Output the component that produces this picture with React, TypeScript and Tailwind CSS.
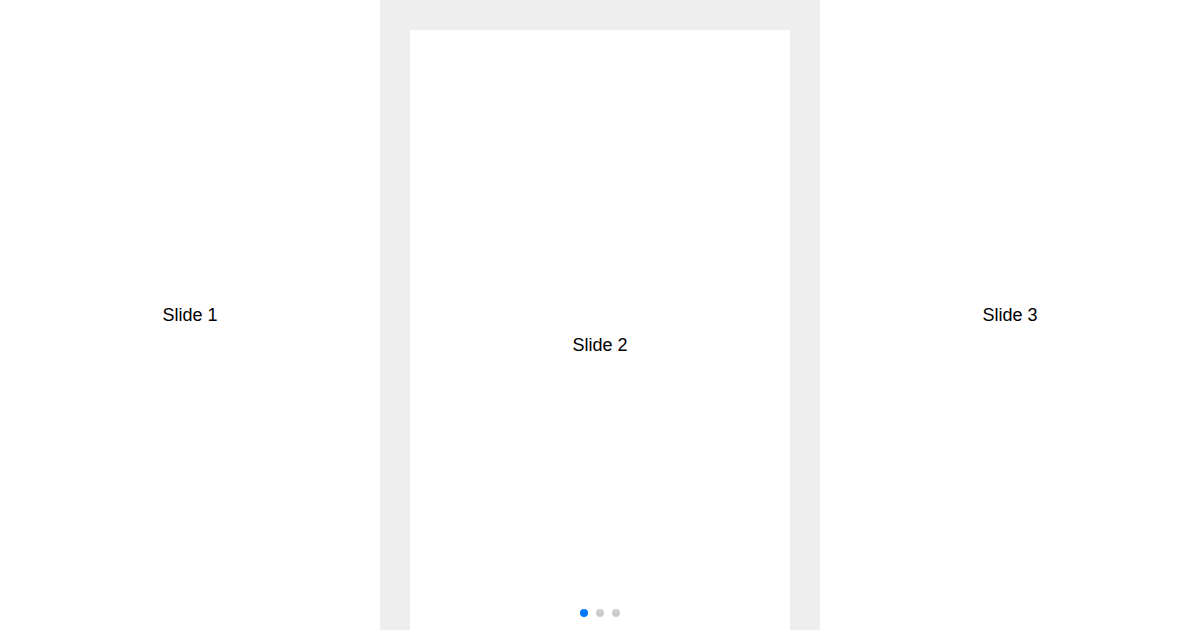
export default function App() {
  return (
    <div className="flex h-[630px] w-[1200px] overflow-hidden bg-white text-[18px] text-black" style={{ fontFamily: '"Liberation Sans", Arial, sans-serif' }}>
      <div className="flex h-[630px] w-[380px] shrink-0 items-center justify-center">Slide 1</div>
      <div className="h-[630px] w-[440px] shrink-0 overflow-hidden bg-[#eeeeee] px-[30px] pt-[30px]">
        <div className="relative flex h-[630px] w-[380px] items-center justify-center bg-white">
          Slide 2
          <div className="absolute left-0 right-0 top-[579px] flex justify-center gap-2">
            <span className="h-2 w-2 rounded-full bg-[#007aff]" />
            <span className="h-2 w-2 rounded-full bg-[#cccccc]" />
            <span className="h-2 w-2 rounded-full bg-[#cccccc]" />
          </div>
        </div>
      </div>
      <div className="flex h-[630px] w-[380px] shrink-0 items-center justify-center">Slide 3</div>
    </div>
  );
}
